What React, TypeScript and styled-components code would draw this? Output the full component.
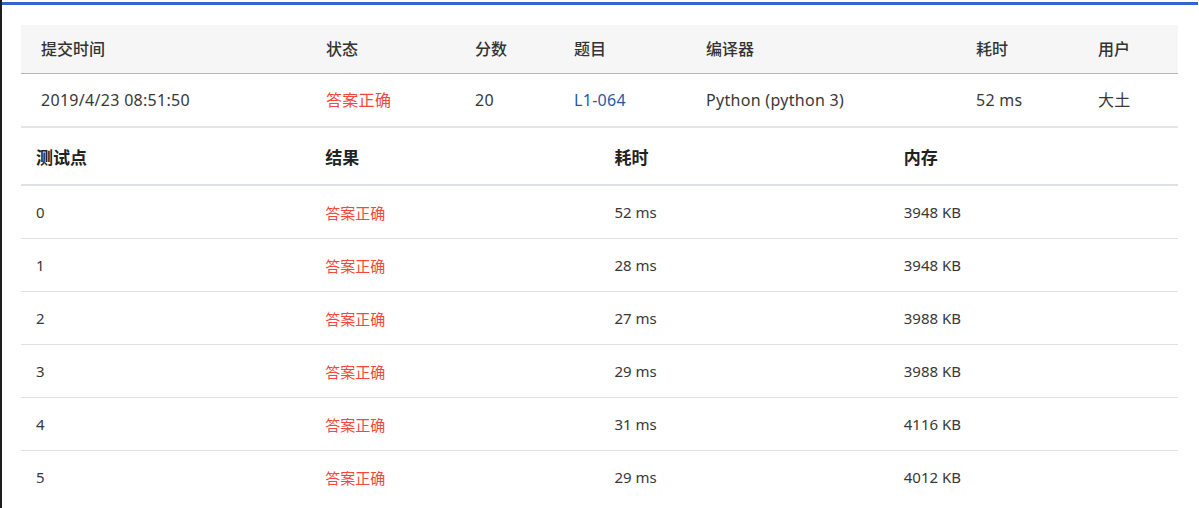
import React from "react";
import styled, { createGlobalStyle } from "styled-components";

const Global = createGlobalStyle`
  html, body { margin: 0; padding: 0; background: #fff; }
  body {
    font-family: "Noto Sans", "Noto Sans CJK SC", sans-serif;
    color: #333;
    overflow: hidden;
  }
`;

const Page = styled.div`
  display: flex;
  flex-direction: column;
  min-height: 508px;
  border-left: 2px solid #1c1f1c;
  box-sizing: border-box;
`;

const TopBar = styled.div`
  margin-top: 2px;
  margin-right: 1px;
  height: 3px;
  background: #3366cc;
`;

const Content = styled.div`
  padding: 20px 21px 0 19px;
  display: flex;
  flex-direction: column;
`;

const summaryCols = "285px 149px 99px 132px 270px 122px 100px";

const SummaryHead = styled.div`
  display: grid;
  grid-template-columns: ${summaryCols};
  align-items: center;
  height: 48px;
  background: #f6f6f6;
  border-bottom: 1px solid #b3b3b3;
`;

const SummaryRow = styled.div`
  display: grid;
  grid-template-columns: ${summaryCols};
  align-items: center;
  height: 52px;
  border-bottom: 2px solid #e5e5e5;
`;

const SCell = styled.div<{ $tone?: "red" | "link" }>`
  padding-left: 20px;
  font-size: 16px;
  line-height: 20px;
  letter-spacing: 0.3px;
  white-space: nowrap;
  color: ${(p) =>
    p.$tone === "red" ? "#f5483b" : p.$tone === "link" ? "#1f5aa6" : "#383838"};
`;

const SHeadCell = styled(SCell)`
  color: #333;
  font-weight: 500;
  letter-spacing: 0;
`;

const CaseTable = styled.div`
  display: flex;
  flex-direction: column;
`;

const CaseHead = styled.div`
  display: grid;
  grid-template-columns: repeat(4, 1fr);
  align-items: center;
  height: 56px;
  border-bottom: 2px solid #dde0e4;
`;

const CaseRow = styled.div`
  display: grid;
  grid-template-columns: repeat(4, 1fr);
  align-items: center;
  height: 52px;
  border-bottom: 1px solid #e0e0e3;
  &:last-child {
    border-bottom-color: transparent;
  }
`;

const CHeadCell = styled.div`
  padding-left: 15px;
  font-size: 17px;
  font-weight: 700;
  color: #222;
  white-space: nowrap;
`;

const CCell = styled.div<{ $red?: boolean }>`
  padding-left: 15px;
  font-size: 15px;
  color: ${(p) => (p.$red ? "#f5483b" : "#383838")};
  white-space: nowrap;
`;

const cases = [
  ["0", "52 ms", "3948 KB"],
  ["1", "28 ms", "3948 KB"],
  ["2", "27 ms", "3988 KB"],
  ["3", "29 ms", "3988 KB"],
  ["4", "31 ms", "4116 KB"],
  ["5", "29 ms", "4012 KB"],
];

export default function App() {
  return (
    <>
      <Global />
      <Page>
        <TopBar />
        <Content>
          <SummaryHead>
            <SHeadCell>提交时间</SHeadCell>
            <SHeadCell>状态</SHeadCell>
            <SHeadCell>分数</SHeadCell>
            <SHeadCell>题目</SHeadCell>
            <SHeadCell>编译器</SHeadCell>
            <SHeadCell>耗时</SHeadCell>
            <SHeadCell>用户</SHeadCell>
          </SummaryHead>
          <SummaryRow>
            <SCell>2019/4/23 08:51:50</SCell>
            <SCell $tone="red">答案正确</SCell>
            <SCell>20</SCell>
            <SCell $tone="link">L1-064</SCell>
            <SCell>Python (python 3)</SCell>
            <SCell>52 ms</SCell>
            <SCell>大土</SCell>
          </SummaryRow>
          <CaseTable>
            <CaseHead>
              <CHeadCell>测试点</CHeadCell>
              <CHeadCell>结果</CHeadCell>
              <CHeadCell>耗时</CHeadCell>
              <CHeadCell>内存</CHeadCell>
            </CaseHead>
            {cases.map(([id, time, mem]) => (
              <CaseRow key={id}>
                <CCell>{id}</CCell>
                <CCell $red>答案正确</CCell>
                <CCell>{time}</CCell>
                <CCell>{mem}</CCell>
              </CaseRow>
            ))}
          </CaseTable>
        </Content>
      </Page>
    </>
  );
}
